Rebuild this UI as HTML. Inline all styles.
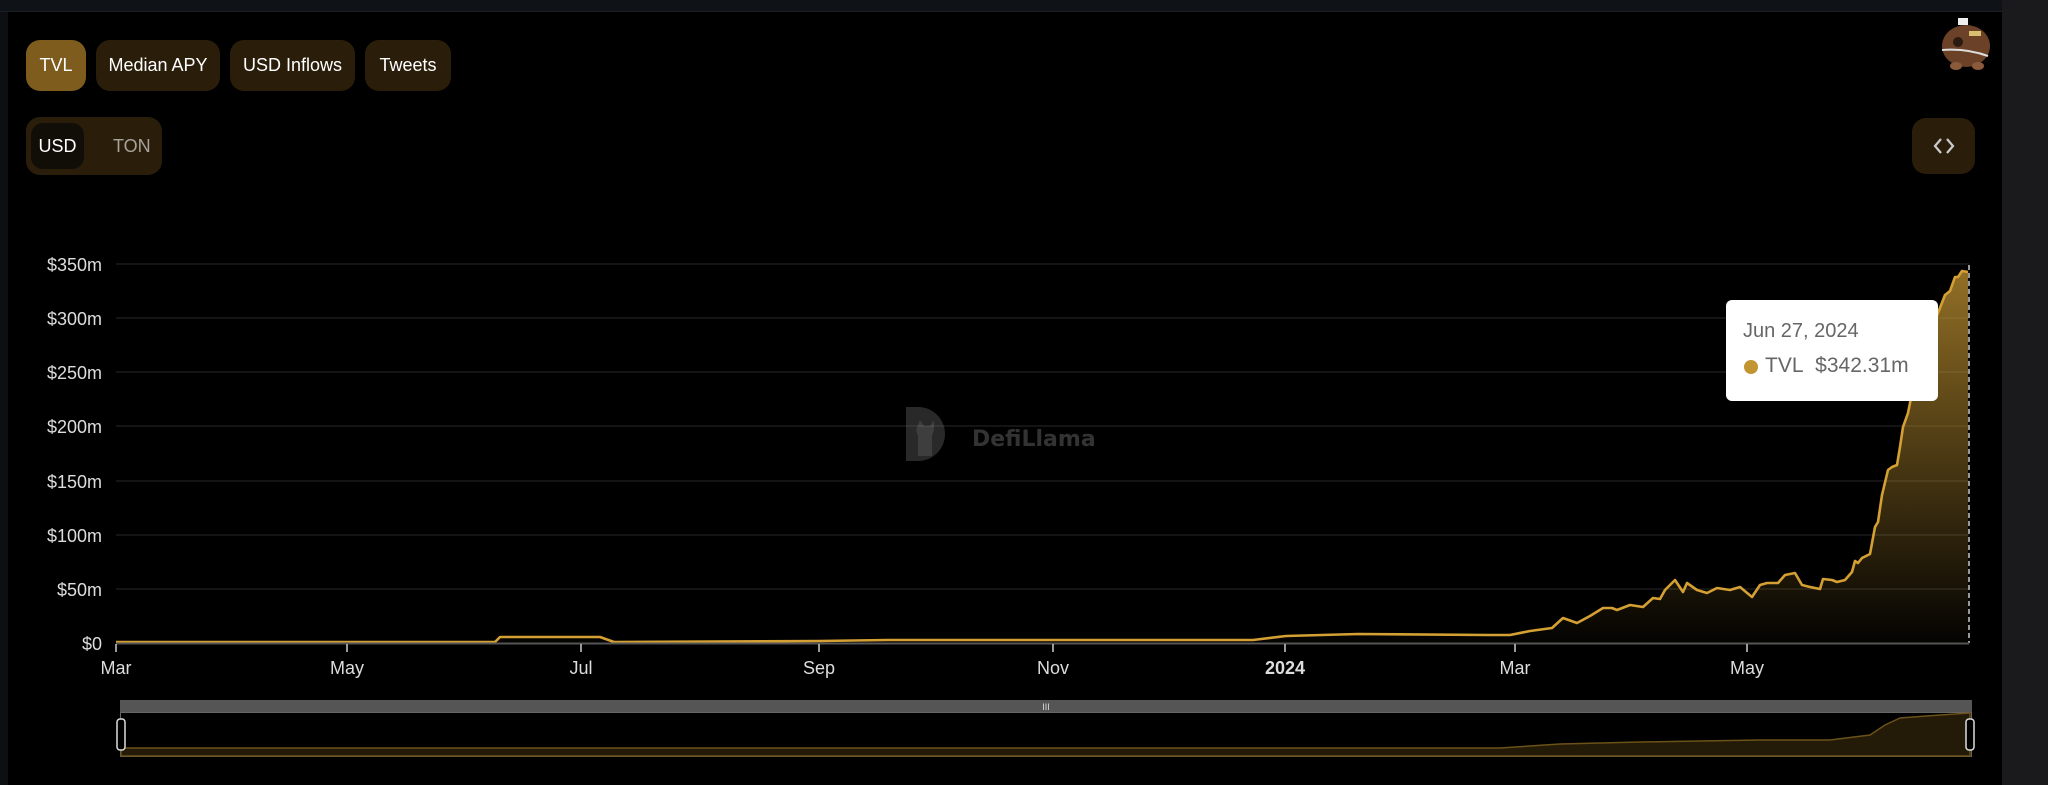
<!DOCTYPE html>
<html><head><meta charset="utf-8"><style>
*{margin:0;padding:0;box-sizing:border-box}
body{width:2048px;height:785px;background:#000;overflow:hidden;position:relative;font-family:"Liberation Sans",sans-serif}
.top{position:absolute;left:0;top:0;width:2048px;height:12px;background:#0f1216;border-bottom:1px solid #1c2026}
.lstrip{position:absolute;left:0;top:12px;width:8px;height:773px;background:#0d0f12}
.rpanel{position:absolute;left:2002px;top:0;width:46px;height:785px;background:#1a1a1d}
.btn{position:absolute;top:40px;height:51px;border-radius:14px;background:#2a1e0b;color:#fff;font-size:18px;display:flex;align-items:center;justify-content:center}
.tog{position:absolute;left:26px;top:117px;width:136px;height:58px;border-radius:14px;background:#2a1e0b}
.tog .a{position:absolute;left:5px;top:6px;width:53px;height:46px;border-radius:12px;background:#110d07;color:#fff;font-size:18px;display:flex;align-items:center;justify-content:center}
.tog .b{position:absolute;left:87px;top:6px;height:46px;color:#a8a29a;font-size:18px;display:flex;align-items:center}
.emb{position:absolute;left:1912px;top:118px;width:63px;height:56px;border-radius:14px;background:#2a1e0b}
.tip{position:absolute;left:1726px;top:300px;width:212px;height:101px;background:#fff;border-radius:6px}
</style></head><body>
<div class="top"></div><div class="lstrip"></div><div class="rpanel"></div>
<div class="btn" style="left:26px;width:60px;background:#7d5c1e">TVL</div>
<div class="btn" style="left:96px;width:124px">Median APY</div>
<div class="btn" style="left:230px;width:125px">USD Inflows</div>
<div class="btn" style="left:365px;width:86px">Tweets</div>
<div class="tog"><div class="a">USD</div><div class="b">TON</div></div>
<div class="emb"><svg width="63" height="56" viewBox="0 0 63 56"><path d="M29 21 L23 28 L29 35 M35 21 L41 28 L35 35" stroke="#ccc" stroke-width="2.2" fill="none"/></svg></div>
<svg style="position:absolute;left:1936px;top:14px" width="56" height="58" viewBox="0 0 56 58">
<ellipse cx="30" cy="32" rx="24" ry="21" fill="#6b4128"/><ellipse cx="20" cy="52" rx="6" ry="4" fill="#8a5a3a"/><ellipse cx="42" cy="52" rx="6" ry="4" fill="#8a5a3a"/>
<circle cx="22" cy="28" r="5" fill="#2a1a10"/><path d="M6 36 Q30 34 52 42" stroke="#ddd" stroke-width="2" fill="none"/><rect x="22" y="4" width="10" height="7" fill="#eee"/><rect x="33" y="17" width="12" height="5" fill="#d8c070"/></svg>
<svg style="position:absolute;left:0;top:0" width="2048" height="785" viewBox="0 0 2048 785">
<defs><linearGradient id="g" x1="0" y1="0" x2="0" y2="1"><stop offset="0" stop-color="#c29432" stop-opacity=".75"/><stop offset="1" stop-color="#c29432" stop-opacity="0.02"/></linearGradient></defs>
<g stroke="#1a1a1a" stroke-width="1.5">
<line x1="116" y1="264" x2="1969" y2="264"/><line x1="116" y1="318" x2="1969" y2="318"/><line x1="116" y1="372" x2="1969" y2="372"/><line x1="116" y1="426" x2="1969" y2="426"/><line x1="116" y1="481" x2="1969" y2="481"/><line x1="116" y1="535" x2="1969" y2="535"/><line x1="116" y1="589" x2="1969" y2="589"/></g>
<g fill="#ddd" font-size="18" text-anchor="end" font-family="Liberation Sans,sans-serif">
<text x="102" y="271">$350m</text><text x="102" y="325">$300m</text><text x="102" y="379">$250m</text><text x="102" y="433">$200m</text><text x="102" y="488">$150m</text><text x="102" y="542">$100m</text><text x="102" y="596">$50m</text><text x="102" y="650">$0</text></g>
<path fill="url(#g)" d="M116 643 L116 642 L495 642 L500 637 L600 637 L614 642 L819 641 L888 640 L1253 640 L1286 636 L1358 634 L1488 635 L1510 635 L1530 631 L1552 628 L1563 618 L1577 623 L1590 616 L1603 608 L1612 608 L1617 610 L1630 605 L1643 607 L1653 598 L1660 599 L1665 590 L1675 580 L1683 592 L1687 583 L1697 590 L1707 593 L1717 588 L1730 590 L1740 587 L1752 597 L1760 585 L1767 583 L1778 583 L1785 575 L1795 573 L1802 585 L1810 587 L1820 589 L1823 579 L1832 580 L1837 582 L1845 580 L1852 572 L1855 561 L1858 563 L1862 558 L1870 554 L1875 527 L1878 522 L1882 495 L1888 470 L1892 467 L1897 465 L1900 447 L1903 427 L1908 413 L1912 393 L1917 370 L1927 340 L1938 313 L1945 295 L1950 291 L1955 277 L1958 277 L1962 271 L1968 272 L1968 643 Z"/>
<path fill="none" stroke="#d4a033" stroke-width="2.6" stroke-linejoin="round" d="M116 642 L495 642 L500 637 L600 637 L614 642 L819 641 L888 640 L1253 640 L1286 636 L1358 634 L1488 635 L1510 635 L1530 631 L1552 628 L1563 618 L1577 623 L1590 616 L1603 608 L1612 608 L1617 610 L1630 605 L1643 607 L1653 598 L1660 599 L1665 590 L1675 580 L1683 592 L1687 583 L1697 590 L1707 593 L1717 588 L1730 590 L1740 587 L1752 597 L1760 585 L1767 583 L1778 583 L1785 575 L1795 573 L1802 585 L1810 587 L1820 589 L1823 579 L1832 580 L1837 582 L1845 580 L1852 572 L1855 561 L1858 563 L1862 558 L1870 554 L1875 527 L1878 522 L1882 495 L1888 470 L1892 467 L1897 465 L1900 447 L1903 427 L1908 413 L1912 393 L1917 370 L1927 340 L1938 313 L1945 295 L1950 291 L1955 277 L1958 277 L1962 271 L1968 272"/>
<line x1="1969" y1="265" x2="1969" y2="643" stroke="#ccc" stroke-width="1.5" stroke-dasharray="5 3"/>
<line x1="116" y1="643.5" x2="1969" y2="643.5" stroke="#555" stroke-width="2"/>
<g stroke="#ccc" stroke-width="1.5"><line x1="116" y1="644" x2="116" y2="652"/><line x1="347" y1="644" x2="347" y2="652"/><line x1="581" y1="644" x2="581" y2="652"/><line x1="819" y1="644" x2="819" y2="652"/><line x1="1053" y1="644" x2="1053" y2="652"/><line x1="1285" y1="644" x2="1285" y2="652"/><line x1="1515" y1="644" x2="1515" y2="652"/><line x1="1747" y1="644" x2="1747" y2="652"/></g>
<g fill="#ddd" font-size="18" text-anchor="middle" font-family="Liberation Sans,sans-serif">
<text x="116" y="674">Mar</text><text x="347" y="674">May</text><text x="581" y="674">Jul</text><text x="819" y="674">Sep</text><text x="1053" y="674">Nov</text><text x="1285" y="674" font-weight="bold">2024</text><text x="1515" y="674">Mar</text><text x="1747" y="674">May</text></g>
<g opacity="0.3">
<path d="M906 407 h12 a27 27 0 0 1 0 54 h-12 z" fill="#888"/>
<path d="M920 420 l4 6 h6 l4 -6 v10 l-2 6 v20 h-14 v-20 l-2 -6 z" fill="#ccc"/>
<text x="972" y="446" font-size="22" font-weight="bold" fill="#aaa" font-family="DejaVu Sans,sans-serif">DefiLlama</text></g>
<rect x="120" y="700" width="1852" height="12" fill="#555"/>
<text x="1046" y="710" font-size="9" fill="#ddd" text-anchor="middle">III</text>
<rect x="120.5" y="712.5" width="1851" height="44" fill="none" stroke="#666"/>
<path fill="#241a08" stroke="#6b5218" stroke-width="1.5" d="M121 748 L1500 748 L1560 744 L1640 742 L1700 741 L1760 740 L1830 740 L1870 735 L1885 725 L1900 718 L1940 715 L1970 713 L1970 756 L121 756 Z"/>
<rect x="117" y="719" width="8" height="31" rx="3" fill="#000" stroke="#ddd" stroke-width="1.5"/>
<rect x="1966" y="719" width="8" height="31" rx="3" fill="#000" stroke="#ddd" stroke-width="1.5"/>
</svg>
<div class="tip">
<div style="position:absolute;left:17px;top:20px;font-size:20px;color:#666">Jun 27, 2024</div>
<div style="position:absolute;left:18px;top:60px;width:14px;height:14px;border-radius:50%;background:#c29432"></div>
<div style="position:absolute;left:39px;top:54px;font-size:21px;color:#666">TVL&nbsp;&nbsp;$342.31m</div>
</div>
</body></html>
